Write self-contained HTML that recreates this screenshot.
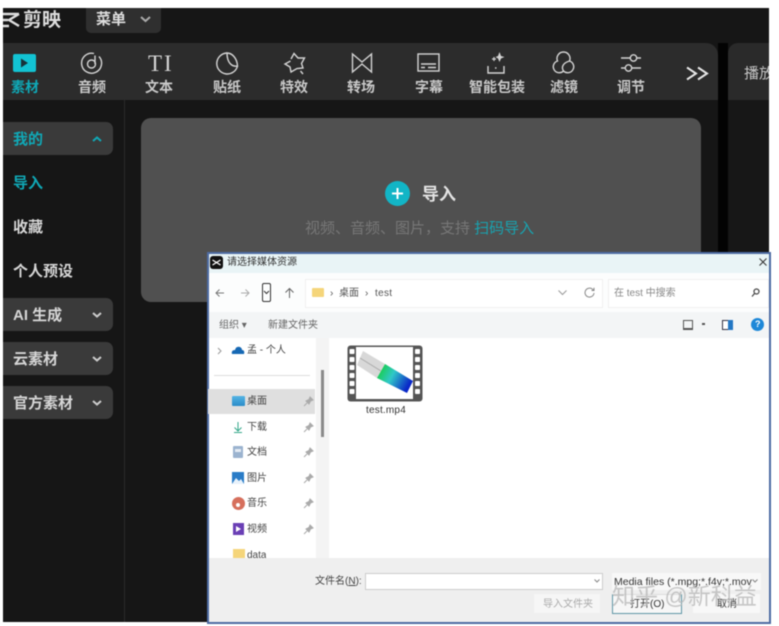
<!DOCTYPE html>
<html lang="zh"><head><meta charset="utf-8">
<style>
html,body{margin:0;padding:0;background:#fff}
body{width:779px;height:626px;position:relative;overflow:hidden;font-family:"Liberation Sans","Noto Sans CJK SC",sans-serif}
div,span,svg{position:absolute}
#r{left:0;top:0;width:779px;height:626px;filter:blur(.45px)}
.t{white-space:nowrap;line-height:1}
.tool{color:#c9c9c9;font-size:14px;font-weight:700;top:80px;transform:translateX(-50%)}
.ic{fill:none;stroke:#d4d4d4;stroke-width:1.4}
.side{left:3px;width:110px;height:33px;background:#3a3a3a;border-radius:0 7px 7px 0}
.st{left:13px;font-size:15px;font-weight:700;color:#d6d6d6;margin-top:1px}
.ft{font-size:10px;color:#555;margin-top:1px}
</style></head><body><div id="r">
<div style="left:3px;top:8px;width:766px;height:614px;background:#161616"></div>
<svg style="left:2px;top:12px" width="19" height="16" viewBox="0 0 19 16"><path d="M1 2H17M17 2L7 8L17 14M1 14H7M1 8H6" fill="none" stroke="#ddd" stroke-width="2.400"/></svg>
<div class="t" style="left:23px;top:11px;font-size:19px;font-weight:700;color:#ddd">剪映</div>
<div style="left:86px;top:8px;width:75px;height:25px;background:#2f2f2f;border-radius:0 0 5px 5px"></div>
<div class="t" style="left:96px;top:12px;font-size:15px;font-weight:700;color:#ddd">菜单</div>
<svg style="left:140px;top:16px" width="11" height="7"><path d="M1 1L5.500 5L10 1" fill="none" stroke="#aaa" stroke-width="2"/></svg>

<div style="left:3px;top:43px;width:715px;height:57px;background:#2c2c2c;border-radius:0 12px 0 0"></div>
<div style="left:718px;top:43px;width:10px;height:579px;background:#030303"></div>
<div style="left:728px;top:43px;width:41px;height:57px;background:#2a2a2a;border-radius:10px 0 0 0"></div>
<div style="left:728px;top:100px;width:41px;height:522px;background:#171717"></div>
<div class="t" style="left:744px;top:66px;font-size:15px;color:#c4c4c4;width:25px;overflow:hidden">播放</div>

<!-- toolbar icons -->
<div style="left:13px;top:54px;width:23px;height:18px;background:#12c3d3;border-radius:2px"></div>
<svg style="left:20px;top:58px" width="9" height="10"><path d="M1 0.500L8 5L1 9.500Z" fill="#16333a"/></svg>
<svg class="ic" style="left:80px;top:51px" width="23" height="24" viewBox="0 0 23 24"><path d="M14 2.500A10 10 0 1 0 19 5.500"/><circle cx="11.500" cy="13" r="4"/><path d="M15 13V4.500"/></svg>
<div class="t" style="left:148px;top:52px;font-size:23px;font-family:'Liberation Serif',serif;color:#d4d4d4;letter-spacing:2px">TI</div>
<svg class="ic" style="left:215px;top:51px" width="24" height="24" viewBox="0 0 24 24"><path d="M12 2A10.500 10.500 0 1 0 22.500 15"/><path d="M12 2C17 2 22 7 22.500 15C17 16 12 12 12 2Z"/></svg>
<svg class="ic" style="left:283px;top:52px" width="24" height="24" viewBox="0 0 24 24"><path d="M8 7L11 1.500L15 6L21.500 6L18.500 11.500L20 16L14 16.500L8 20L7 15L2 12L7.500 9"/><path d="M17.500 19L20 22"/></svg>
<svg class="ic" style="left:351px;top:52px" width="22" height="22" viewBox="0 0 22 22"><path d="M1.500 2V20L11 12L20.500 20V2L11 10Z"/></svg>
<svg class="ic" style="left:417px;top:53px" width="24" height="20" viewBox="0 0 24 20"><rect x="1" y="1" width="21" height="17"/><path d="M4 11H19M4 14.500H8M11 14.500H19"/></svg>
<svg class="ic" style="left:485px;top:51px" width="23" height="24" viewBox="0 0 23 24"><path d="M3 15V22H19V15"/><path d="M7 8H11M9 6V10" stroke-width="1.200"/><path d="M14.500 1L16 5L19.500 6L16 7.500L14.500 11L13 7.500L10.500 6L13 5Z" fill="#d4d4d4" stroke="none"/><path d="M10 17H11.500"/></svg>
<svg class="ic" style="left:552px;top:51px" width="23" height="25" viewBox="0 0 23 25"><path d="M5.500 10A6.500 6.500 0 1 1 17.500 10A6 6 0 1 1 11.500 20A6 6 0 1 1 5.500 10Z"/><path d="M11.500 20C9 16 11 12 17.500 10"/></svg>
<svg class="ic" style="left:620px;top:51px" width="22" height="24" viewBox="0 0 22 24"><path d="M1 7H10M17 7H21M1 17H5M12 17H21"/><circle cx="13.500" cy="7" r="3.200"/><circle cx="8.500" cy="17" r="3.200"/></svg>
<svg style="left:686px;top:66px" width="23" height="15"><path d="M1 1.500L10 7.500L1 13.500M12 1.500L21 7.500L12 13.500" fill="none" stroke="#e6e6e6" stroke-width="2"/></svg>

<div class="t tool" style="left:25px;color:#0fa9b7">素材</div>
<div class="t tool" style="left:92px">音频</div>
<div class="t tool" style="left:159px">文本</div>
<div class="t tool" style="left:227px">贴纸</div>
<div class="t tool" style="left:294px">特效</div>
<div class="t tool" style="left:361px">转场</div>
<div class="t tool" style="left:429px">字幕</div>
<div class="t tool" style="left:497px">智能包装</div>
<div class="t tool" style="left:564px">滤镜</div>
<div class="t tool" style="left:631px">调节</div>

<!-- sidebar -->
<div style="left:124px;top:100px;width:1px;height:522px;background:#2a2a2a"></div>
<div class="side" style="top:122px"></div>
<div class="side" style="top:298px"></div>
<div class="side" style="top:342px"></div>
<div class="side" style="top:386px"></div>
<div class="t st" style="top:131px;color:#10a8b6">我的</div>
<svg style="left:92px;top:136px" width="10" height="6"><path d="M1 5L5 1.500L9 5" fill="none" stroke="#10a8b6" stroke-width="2"/></svg>
<div class="t st" style="top:175px;color:#10a8b6">导入</div>
<div class="t st" style="top:219px">收藏</div>
<div class="t st" style="top:263px">个人预设</div>
<div class="t st" style="top:307px">AI 生成</div>
<div class="t st" style="top:351px">云素材</div>
<div class="t st" style="top:395px">官方素材</div>
<svg style="left:92px;top:312px" width="10" height="6"><path d="M1 1L5 4.500L9 1" fill="none" stroke="#ccc" stroke-width="2"/></svg>
<svg style="left:92px;top:356px" width="10" height="6"><path d="M1 1L5 4.500L9 1" fill="none" stroke="#ccc" stroke-width="2"/></svg>
<svg style="left:92px;top:400px" width="10" height="6"><path d="M1 1L5 4.500L9 1" fill="none" stroke="#ccc" stroke-width="2"/></svg>

<!-- import area -->
<div style="left:141px;top:118px;width:560px;height:184px;background:#505050;border-radius:10px"></div>
<div style="left:385px;top:181px;width:25px;height:25px;border-radius:50%;background:#12b5c6"></div>
<svg style="left:391px;top:187px" width="13" height="13"><path d="M6.500 1V12M1 6.500H12" stroke="#fff" stroke-width="2"/></svg>
<div class="t" style="left:422px;top:186px;font-size:17px;font-weight:700;color:#e4e4e4">导入</div>
<div class="t" style="left:305px;top:221px;font-size:15px;color:#777">视频、音频、图片，支持 <span style="position:static;color:#18a3b0">扫码导入</span></div>

<!-- dialog -->
<div style="left:207px;top:252px;width:560px;height:368px;border:2px solid #4d6ba3;background:#fff"></div>
<div style="left:209px;top:254px;width:560px;height:19px;background:#e9f4f6"></div>
<div style="left:210px;top:256px;width:13px;height:13px;background:#111;border-radius:3px"></div>
<svg style="left:212px;top:259px" width="9" height="7"><path d="M0.500 1L8.500 6M0.500 6L8.500 1" stroke="#fff" stroke-width="1.300"/></svg>
<div class="t ft" style="left:227px;top:257px;font-size:10px;color:#333">请选择媒体资源</div>
<svg style="left:759px;top:258px" width="8" height="8"><path d="M0.500 0.500L7.500 7.500M7.500 0.500L0.500 7.500" stroke="#333" stroke-width="1"/></svg>

<div style="left:209px;top:273px;width:560px;height:39px;background:#fcfdfd"></div>
<svg style="left:215px;top:288px" width="10" height="10"><path d="M9 5H1M4.500 1.500L1 5L4.500 8.500" fill="none" stroke="#777"/></svg>
<svg style="left:240px;top:288px" width="10" height="10"><path d="M1 5H9M5.500 1.500L9 5L5.500 8.500" fill="none" stroke="#aaa"/></svg>
<div style="left:262px;top:283px;width:7px;height:17px;border:1.500px solid #333;border-radius:2px"></div>
<svg style="left:263px;top:290px" width="7" height="5"><path d="M1 1L3.500 3.500L6 1" fill="none" stroke="#333"/></svg>
<svg style="left:284px;top:287px" width="11" height="12"><path d="M5.500 11V1.500M1.500 5.500L5.500 1.500L9.500 5.500" fill="none" stroke="#666"/></svg>
<div style="left:305px;top:279px;width:296px;height:27px;border:1px solid #f0f0f0;background:#fff"></div>
<div style="left:312px;top:288px;width:12px;height:9px;background:#f5d57a;border-radius:1px"></div>
<div class="t ft" style="left:330px;top:288px">›</div>
<div class="t ft" style="left:339px;top:288px">桌面</div>
<div class="t ft" style="left:365px;top:288px">›</div>
<div class="t ft" style="left:375px;top:288px;letter-spacing:.3px">test</div>
<svg style="left:558px;top:290px" width="9" height="6"><path d="M.5 .5L4.500 4.500L8.500 .5" fill="none" stroke="#999"/></svg>
<svg style="left:584px;top:287px" width="11" height="11" viewBox="0 0 11 11"><path d="M9.500 3.500A4.500 4.500 0 1 0 10 6M10 .8V3.500H7.500" fill="none" stroke="#888"/></svg>
<div style="left:608px;top:279px;width:159px;height:27px;border:1px solid #f0f0f0;background:#fff"></div>
<div class="t ft" style="left:614px;top:288px;color:#888">在 test 中搜索</div>
<svg style="left:751px;top:288px" width="9" height="10"><circle cx="5.500" cy="3.500" r="2.500" fill="none" stroke="#444" stroke-width="1.200"/><path d="M3.500 5.500L1 8.500" stroke="#444" stroke-width="1.200"/></svg>

<div style="left:209px;top:312px;width:560px;height:26px;background:#f3f5f6"></div>
<div class="t ft" style="left:219px;top:320px;color:#666">组织 ▾</div>
<div class="t ft" style="left:268px;top:320px;color:#666">新建文件夹</div>
<div style="left:683px;top:320px;width:8px;height:7px;border:1.500px solid #555;border-bottom-width:2.500px"></div>
<div style="left:702px;top:323px;width:3px;height:2px;background:#555"></div>
<div style="left:722px;top:320px;width:8px;height:8px;border:1.500px solid #334;background:#fff"></div>
<div style="left:728px;top:320px;width:5px;height:10px;background:#2377c4"></div>
<div style="left:751px;top:318px;width:13px;height:13px;border-radius:50%;background:#1e88d8"></div>
<div class="t" style="left:755px;top:320px;font-size:9px;font-weight:700;color:#fff">?</div>

<!-- nav pane -->
<div style="left:316px;top:338px;width:13px;height:220px;background:#f4f4f4"></div>
<div style="left:321px;top:370px;width:3px;height:67px;background:#8a8a8a"></div>
<svg style="left:217px;top:347px" width="5" height="8"><path d="M1 1L4 4L1 7" fill="none" stroke="#999"/></svg>
<svg style="left:231px;top:345px" width="14" height="10"><path d="M1 9Q0 5 4 5Q5 1 9 2Q11 3 11 5Q14 5 13 9Z" fill="#1668b4"/></svg>
<div class="t ft" style="left:247px;top:345px;color:#444">孟 - 个人</div>
<div style="left:214px;top:375px;width:96px;height:1px;background:#ddd"></div>
<div style="left:208px;top:389px;width:107px;height:25px;background:#dfdfdf"></div>
<div style="left:232px;top:396px;width:13px;height:10px;background:linear-gradient(#54b4e4,#2b8cc9);border-radius:1px"></div>
<div class="t ft" style="left:247px;top:396px;color:#444">桌面</div>
<svg style="left:233px;top:421px" width="10" height="12"><path d="M5 1V10M1.500 6.500L5 10L8.500 6.500M1 11.500H9" fill="none" stroke="#35a88a"/></svg>
<div class="t ft" style="left:247px;top:422px;color:#444">下载</div>
<div style="left:233px;top:446px;width:10px;height:12px;background:#9bb3cf;border-radius:1px"></div>
<div style="left:235px;top:449px;width:6px;height:3px;background:#e4ebf3"></div>
<div class="t ft" style="left:247px;top:447px;color:#444">文档</div>
<div style="left:232px;top:472px;width:12px;height:12px;background:#2a7cc7"></div>
<svg style="left:232px;top:476px" width="12" height="8"><path d="M0 8L4 2L7 5L9 3L12 8Z" fill="#e8f2fb"/></svg>
<div class="t ft" style="left:247px;top:473px;color:#444">图片</div>
<div style="left:232px;top:497px;width:13px;height:13px;border-radius:50%;background:#d66f5c"></div>
<div style="left:236px;top:503px;width:4px;height:4px;border-radius:50%;background:#fff"></div>
<div class="t ft" style="left:247px;top:498px;color:#444">音乐</div>
<div style="left:233px;top:523px;width:11px;height:12px;background:#6a3fb5"></div>
<svg style="left:236px;top:526px" width="6" height="6"><path d="M0 0L5 3L0 6Z" fill="#fff"/></svg>
<div class="t ft" style="left:247px;top:524px;color:#444">视频</div>
<div style="left:233px;top:549px;width:12px;height:9px;background:#f5d57a"></div>
<div class="t ft" style="left:247px;top:549px;color:#444;height:9px;overflow:hidden;line-height:11px">data</div>
<svg style="left:303px;top:396px" width="11" height="11"><path d="M7 1L10 4L7.500 5L6 8L3 5L6 3.500ZM4 7L1 10" fill="#aaa" stroke="#aaa"/></svg>
<svg style="left:303px;top:422px" width="11" height="11"><path d="M7 1L10 4L7.500 5L6 8L3 5L6 3.500ZM4 7L1 10" fill="#aaa" stroke="#aaa"/></svg>
<svg style="left:303px;top:447px" width="11" height="11"><path d="M7 1L10 4L7.500 5L6 8L3 5L6 3.500ZM4 7L1 10" fill="#aaa" stroke="#aaa"/></svg>
<svg style="left:303px;top:473px" width="11" height="11"><path d="M7 1L10 4L7.500 5L6 8L3 5L6 3.500ZM4 7L1 10" fill="#aaa" stroke="#aaa"/></svg>
<svg style="left:303px;top:498px" width="11" height="11"><path d="M7 1L10 4L7.500 5L6 8L3 5L6 3.500ZM4 7L1 10" fill="#aaa" stroke="#aaa"/></svg>
<svg style="left:303px;top:524px" width="11" height="11"><path d="M7 1L10 4L7.500 5L6 8L3 5L6 3.500ZM4 7L1 10" fill="#aaa" stroke="#aaa"/></svg>

<!-- file -->
<svg style="left:347px;top:345px" width="76" height="57" viewBox="0 0 76 57">
<defs><linearGradient id="g" x1="0" y1="0" x2="1" y2=".45"><stop offset="0" stop-color="#10d020"/><stop offset=".5" stop-color="#30c8c8"/><stop offset="1" stop-color="#0a28c8"/></linearGradient></defs>
<rect x="0.500" y="0.500" width="75" height="56" rx="3" fill="#555"/>
<rect x="9" y="2" width="57" height="52" fill="#fff"/>
<g fill="#fff"><rect x="2.500" y="4" width="5" height="5" rx="1"/><rect x="2.500" y="12" width="5" height="5" rx="1"/><rect x="2.500" y="20" width="5" height="5" rx="1"/><rect x="2.500" y="28" width="5" height="5" rx="1"/><rect x="2.500" y="36" width="5" height="5" rx="1"/><rect x="2.500" y="44" width="5" height="5" rx="1"/><rect x="68" y="4" width="5" height="5" rx="1"/><rect x="68" y="12" width="5" height="5" rx="1"/><rect x="68" y="20" width="5" height="5" rx="1"/><rect x="68" y="28" width="5" height="5" rx="1"/><rect x="68" y="36" width="5" height="5" rx="1"/><rect x="68" y="44" width="5" height="5" rx="1"/></g>
<path d="M16 6L38 19L30 33L10 20Z" fill="#d8d8d8"/><path d="M13 13L34 26" stroke="#aaa"/>
<path d="M38 19L66 36L60 48L30 33Z" fill="url(#g)"/>
</svg>
<div class="t" style="left:366px;top:406px;font-size:10px;color:#333;letter-spacing:.2px">test.mp4</div>

<!-- bottom -->
<div style="left:209px;top:558px;width:560px;height:64px;background:#efefef"></div>
<div class="t ft" style="left:315px;top:576px;color:#444">文件名(<u>N</u>):</div>
<div style="left:365px;top:573px;width:236px;height:15px;border:1px solid #ccc;background:#fff"></div>
<svg style="left:594px;top:579px" width="6" height="4"><path d="M.5 .5L3 3L5.500 .5" fill="none" stroke="#888"/></svg>
<div style="left:612px;top:573px;width:149px;height:17px;background:#f8f8f8"></div>
<div class="t" style="left:614px;top:577px;width:140px;overflow:hidden;font-size:10.500px;color:#333">Media files (*.mpg;*.f4v;*.mov</div>
<svg style="left:752px;top:579px" width="6" height="4"><path d="M.5 .5L3 3L5.500 .5" fill="none" stroke="#888"/></svg>
<div style="left:534px;top:594px;width:66px;height:19px;background:#f6f6f6"></div>
<div class="t ft" style="left:543px;top:599px;color:#aaa">导入文件夹</div>
<div style="left:612px;top:594px;width:68px;height:18px;border:1px solid #5f96a6;border-top-color:#ddd;background:#f7f7f7"></div>
<div class="t ft" style="left:630px;top:599px;color:#333">打开(O)</div>
<div style="left:693px;top:594px;width:67px;height:19px;background:#f8f8f8"></div>
<div class="t ft" style="left:717px;top:599px;color:#333">取消</div>

<!-- watermark -->
<div class="t" style="left:612px;top:585px;font-size:23px;color:rgba(185,185,185,.8);white-space:nowrap">知乎 @新科益</div>
</div></body></html>
